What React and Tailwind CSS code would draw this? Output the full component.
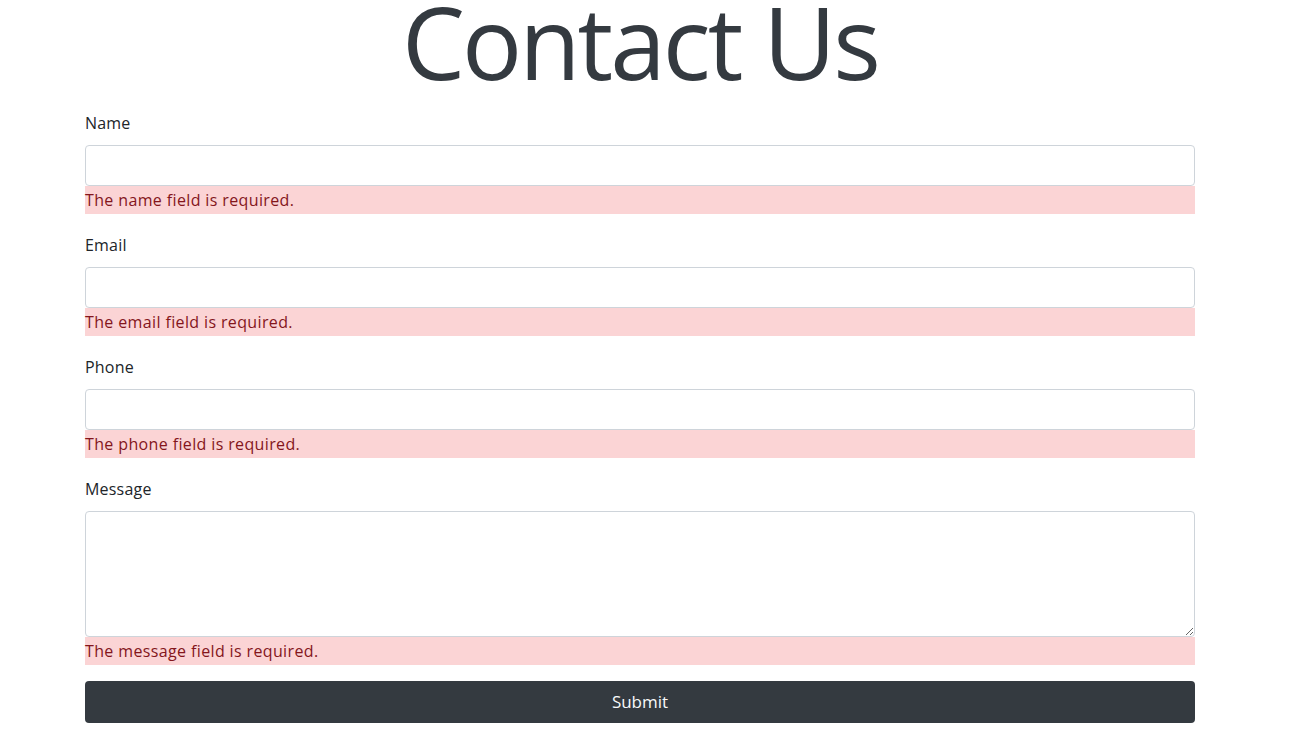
export default function App() {
  const font = { fontFamily: "'Open Sans', 'Noto Sans', sans-serif" };
  const fields = [
    { label: "Name", err: "The name field is required." },
    { label: "Email", err: "The email field is required." },
    { label: "Phone", err: "The phone field is required." },
  ];
  return (
    <div className="w-full min-h-[740px] bg-white" style={font}>
      <div className="ml-[85px] w-[1110px]">
        <h1 className="h-[111px] flex items-start justify-center">
          <span className="block text-[100px] leading-[82px] font-normal tracking-[-3px] text-[#343a40]">Contact Us</span>
        </h1>
        {fields.map((f) => (
          <div key={f.label} className="mb-[19px]">
            <label className="block text-[16px] leading-[24px] tracking-[0.2px] text-[#212529] mb-[10px]">{f.label}</label>
            <input className="block w-full h-[41px] border border-[#ced4da] rounded-[4px] px-3 bg-white" />
            <div className="h-[28px] bg-[#fbd4d5] text-[#84161c] text-[16px] leading-[28px] tracking-[0.37px]">{f.err}</div>
          </div>
        ))}
        <div className="mb-[16px]">
          <label className="block text-[16px] leading-[24px] tracking-[0.2px] text-[#212529] mb-[10px]">Message</label>
          <textarea className="block w-full h-[126px] border border-[#ced4da] rounded-[4px] px-3 bg-white resize-y" />
          <div className="h-[28px] bg-[#fbd4d5] text-[#84161c] text-[16px] leading-[28px] tracking-[0.37px]">The message field is required.</div>
        </div>
        <button className="block w-full h-[42px] rounded-[4px] bg-[#343a40] text-[#f8f9fa] text-[17px]">Submit</button>
      </div>
    </div>
  );
}
